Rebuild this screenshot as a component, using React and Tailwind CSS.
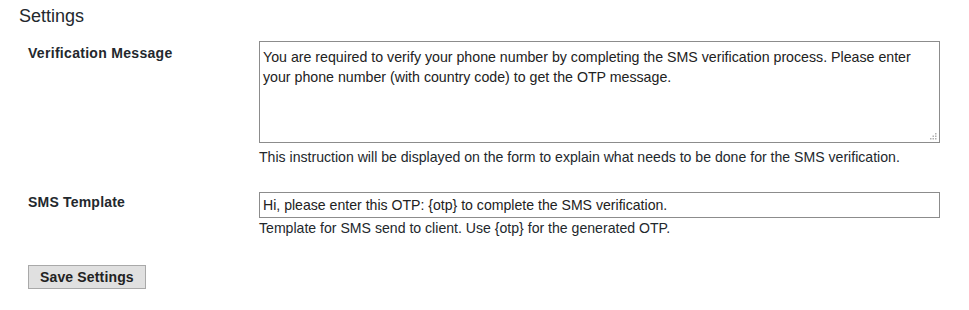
import React, { useState } from 'react';

const font = { fontFamily: '"Liberation Sans", Arial, sans-serif' };

// little dotted grip like the one chrome draws in the corner of a textarea
const Grip = () => (
  <svg className="absolute right-[3px] bottom-[3px] pointer-events-none" width="7" height="7" viewBox="0 0 7 7">
    <rect x="5" y="0" width="1.5" height="1.5" fill="#b0b0b0" />
    <rect x="2.5" y="2.5" width="1.5" height="1.5" fill="#b0b0b0" />
    <rect x="5" y="2.5" width="1.5" height="1.5" fill="#b0b0b0" />
    <rect x="0" y="5" width="1.5" height="1.5" fill="#b0b0b0" />
    <rect x="2.5" y="5" width="1.5" height="1.5" fill="#b0b0b0" />
    <rect x="5" y="5" width="1.5" height="1.5" fill="#b0b0b0" />
  </svg>
);

export default function App() {
  const [message, setMessage] = useState(
    'You are required to verify your phone number by completing the SMS verification process. Please enter your phone number (with country code) to get the OTP message.'
  );
  const [template, setTemplate] = useState('Hi, please enter this OTP: {otp} to complete the SMS verification.');

  return (
    <div className="bg-white w-[969px] h-[310px] text-[#23282d] font-['Liberation_Sans',Arial,sans-serif]">
      <h2 className="pl-[19px] pt-[5px] text-[18px] leading-[22px] font-normal">Settings</h2>

      <div className="pl-[28px] pr-[29px]">
        <div className="flex pt-[14px]">
          <label className="w-[231px] shrink-0 text-[14px] font-bold leading-[20px] pt-[2px] tracking-[0.3px]">
            Verification Message
          </label>
          <div className="flex-1">
            <div className="relative">
              <textarea
                className="block w-full h-[102px] border border-[#8c8c8c] px-[3px] pt-[5px] pb-[1px] text-[14.2px] leading-[20px] text-[#222] resize-none outline-none"
                style={font}
                value={message}
                onChange={e => setMessage(e.target.value)}
              />
              <Grip />
            </div>
            <p className="text-[14.1px] leading-[20px] mt-[4px] text-[#23282d]">
              This instruction will be displayed on the form to explain what needs to be done for the SMS verification.
            </p>
          </div>
        </div>

        <div className="flex pt-[25px]">
          <label className="w-[231px] shrink-0 text-[14px] font-bold leading-[20px] tracking-[0.2px]">SMS Template</label>
          <div className="flex-1">
            <input
              className="block w-full h-[26px] border border-[#8c8c8c] px-[3px] text-[14.1px] text-[#222] outline-none"
              style={font}
              value={template}
              onChange={e => setTemplate(e.target.value)}
            />
            <p className="text-[14.1px] leading-[20px] text-[#23282d]">
              Template for SMS send to client. Use {'{otp}'} for the generated OTP.
            </p>
          </div>
        </div>

        <button className="mt-[27px] h-[24px] px-[11px] bg-[#e0e0e0] border border-[#a9a9a9] text-[14px] font-bold text-[#222] leading-[20px] tracking-[0.15px]">
          Save Settings
        </button>
      </div>
    </div>
  );
}
